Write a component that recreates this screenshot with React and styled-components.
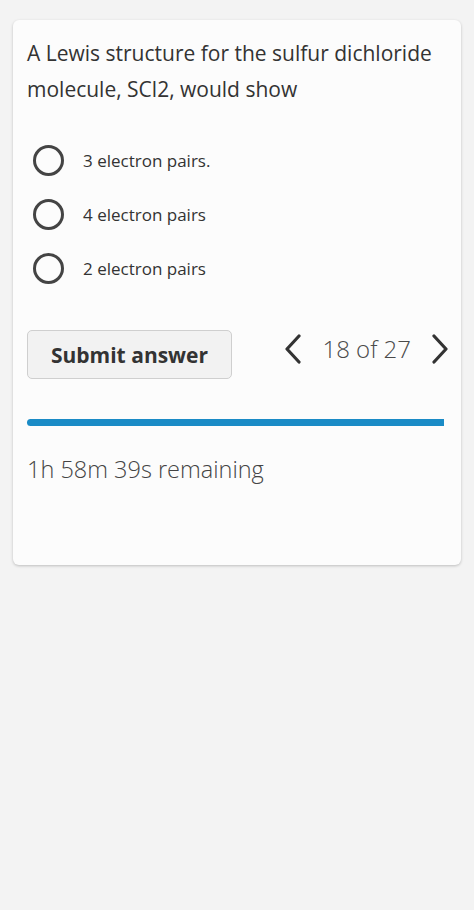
import React from 'react';
import styled, { createGlobalStyle } from 'styled-components';

const GlobalStyle = createGlobalStyle`
  html, body {
    margin: 0;
    padding: 0;
    background: #f3f3f3;
    font-family: "Open Sans", "Liberation Sans", sans-serif;
  }
`;

const Page = styled.main`
  min-height: 910px;
  padding: 20px 13px 0 13px;
  box-sizing: border-box;
`;

const Card = styled.section`
  background: #fcfcfc;
  border-radius: 6px;
  box-shadow: 0 1px 3px rgba(0, 0, 0, 0.22);
  padding: 15px 14px 0 14px;
  height: 545px;
  box-sizing: border-box;
`;

const Question = styled.p`
  margin: 0;
  font-size: 21px;
  line-height: 36px;
  color: #333;
`;

const Options = styled.ul`
  list-style: none;
  margin: 38px 0 0 0;
  padding: 0;
  display: flex;
  flex-direction: column;
  gap: 24px;
`;

const Option = styled.li`
  display: flex;
  align-items: center;
  gap: 19px;
  height: 30px;
  padding-left: 6px;
  font-size: 17px;
  color: #333;
`;

const Radio = styled.span`
  width: 25px;
  height: 25px;
  border: 3px solid #444;
  border-radius: 50%;
  flex: none;
`;

const Controls = styled.div`
  display: flex;
  justify-content: space-between;
  align-items: flex-start;
  margin-top: 47px;
`;

const SubmitButton = styled.button`
  width: 205px;
  height: 49px;
  background: #f2f2f2;
  border: 1px solid #cfcfcf;
  border-radius: 5px;
  font-family: inherit;
  font-size: 21px;
  font-weight: 700;
  color: #333;
  padding: 0;
`;

const Pager = styled.div`
  display: flex;
  align-items: center;
  gap: 13px;
  margin-top: 2px;
  margin-right: -3px;
`;

const PagerText = styled.span`
  font-size: 24px;
  font-weight: 300;
  color: #4a4a4a;
  padding: 0 6px;
`;

const Chevron = ({ dir }) => (
  <svg width="20" height="30" viewBox="0 0 20 30">
    <path
      d={dir === 'left' ? 'M16 2 L4 15 L16 28' : 'M4 2 L16 15 L4 28'}
      fill="none"
      stroke="#333"
      strokeWidth="3.2"
      strokeLinecap="round"
      strokeLinejoin="round"
    />
  </svg>
);

const Track = styled.div`
  margin-top: 40px;
  margin-right: 3px;
  height: 7px;
  background: #1a8bc6;
  border-radius: 4px 0 0 4px;
`;

const Remaining = styled.p`
  margin: 27px 0 0 0;
  font-size: 23.5px;
  font-weight: 300;
  color: #444;
`;

const options = ['3 electron pairs.', '4 electron pairs', '2 electron pairs'];

export default function App() {
  return (
    <>
      <GlobalStyle />
      <Page>
        <Card>
          <Question>
            A Lewis structure for the sulfur dichloride molecule, SCl2, would show
          </Question>
          <Options>
            {options.map((label) => (
              <Option key={label}>
                <Radio />
                {label}
              </Option>
            ))}
          </Options>
          <Controls>
            <SubmitButton>Submit answer</SubmitButton>
            <Pager>
              <Chevron dir="left" />
              <PagerText>18 of 27</PagerText>
              <Chevron dir="right" />
            </Pager>
          </Controls>
          <Track />
          <Remaining>1h 58m 39s remaining</Remaining>
        </Card>
      </Page>
    </>
  );
}
